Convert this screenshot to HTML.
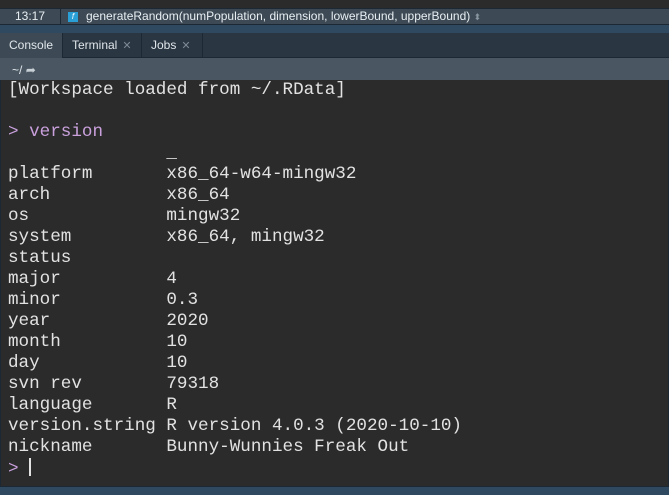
<!DOCTYPE html>
<html><head><style>
body{margin:0;width:669px;height:495px;background:#2f4a60;overflow:hidden;position:relative;font-family:"Liberation Sans",sans-serif}
.top{position:absolute;left:0;top:0;width:669px;height:8px;background:#2b2b2b}
.status{position:absolute;left:0;top:8px;width:669px;height:17px;background:#3d4a55;border-top:1px solid #1c2833;border-bottom:1px solid #1c2833;font-size:12px;color:#e8eef2;box-sizing:border-box}
.status .t{position:absolute;left:0;width:60px;height:15px;line-height:15px;text-align:center;border-right:1px solid #1c2833}
.status .f{position:absolute;left:68px;top:3px;width:10px;height:10px;background:#2a9fd6;color:#fff;font-size:8px;line-height:10px;text-align:center;font-style:italic}
.status .g{position:absolute;left:86px;line-height:15px}
.tabs{position:absolute;left:0;top:33px;width:669px;height:25px;background:#2a3642;border-bottom:1px solid #1c2833;box-sizing:border-box}
.tab{position:absolute;top:0;height:25px;line-height:25px;font-size:12px;color:#e0e6ea;border-right:1px solid #1c2833;box-sizing:border-box;padding-left:9px}
.tab span{color:#7d8a95;font-size:11px;margin-left:5px}
.tool{position:absolute;left:0;top:58px;width:669px;height:22px;background:#4a5763;color:#e0e6ea;font-size:12px}
.con{position:absolute;left:0;top:80px;width:667px;height:406px;background:#2b2b2b;border-left:1px solid #1c2833;border-right:1px solid #1c2833;border-bottom:1px solid #1c2833;overflow:hidden}
pre{margin:0;position:absolute;left:7px;top:0px;font-family:"Liberation Mono","DejaVu Sans Mono",monospace;font-size:17.6px;line-height:21px;color:#e2e2e2}
.c{color:#c9a0dc}
</style></head><body>
<div class="top"></div>
<div class="status"><div class="t">13:17</div><div class="f">f</div><div class="g">generateRandom(numPopulation, dimension, lowerBound, upperBound) <span style="color:#8896a0;font-size:9px">⬍</span></div></div>
<div class="tabs">
<div class="tab" style="left:0;width:63px;background:#3d4a55;height:26px">Console</div>
<div class="tab" style="left:63px;width:79px">Terminal<span>✕</span></div>
<div class="tab" style="left:142px;width:61px">Jobs<span>✕</span></div>
</div>
<div class="tool"><span style="position:absolute;left:12px;top:5px">~/ <span style="color:#c8d0d6">➦</span></span></div>
<div class="con"><pre>[Workspace loaded from ~/.RData]

<span class="c">&gt; version</span>
               _                           
platform       x86_64-w64-mingw32          
arch           x86_64                      
os             mingw32                     
system         x86_64, mingw32             
status                                     
major          4                           
minor          0.3                         
year           2020                        
month          10                          
day            10                          
svn rev        79318                       
language       R                           
version.string R version 4.0.3 (2020-10-10)
nickname       Bunny-Wunnies Freak Out     
<span class="c">&gt; </span><span style="display:inline-block;width:2px;height:18px;background:#e2e2e2;vertical-align:-3px"></span></pre></div>
</body></html>
